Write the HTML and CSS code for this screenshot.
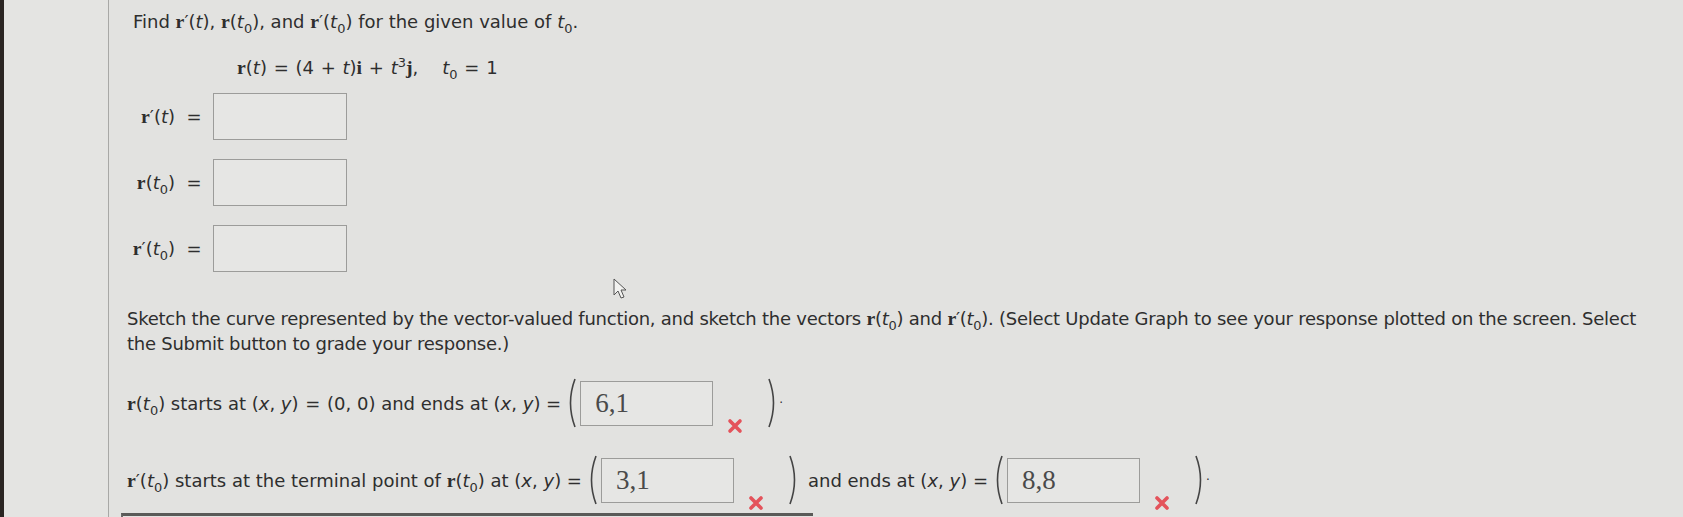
FILE: index.html
```html
<!DOCTYPE html>
<html>
<head>
<meta charset="utf-8">
<link rel="stylesheet" href="styles.css">
</head>
<body>
<div class="frame">
  <div class="edge"></div>
  <div class="side"></div>
  <div class="main">
    <p class="q1">Find <b class="r">r</b>′(<i>t</i>), <b class="r">r</b>(<i>t</i><sub>0</sub>), and <b class="r">r</b>′(<i>t</i><sub>0</sub>) for the given value of <i>t</i><sub>0</sub>.</p>
    <p class="eq"><b class="r">r</b>(<i>t</i>) <span class="op">=</span> (4 <span class="op">+</span> <i>t</i>)<b class="r">i</b> <span class="op">+</span> <i>t</i><sup>3</sup><b class="r">j</b>,<span class="sp"></span><i>t</i><sub>0</sub> <span class="op">=</span> 1</p>

    <div class="answers">
      <div class="lab"><b class="r">r</b>′(<i>t</i>)</div><div class="eqs">=</div><div class="box"></div>
      <div class="lab"><b class="r">r</b>(<i>t</i><sub>0</sub>)</div><div class="eqs">=</div><div class="box"></div>
      <div class="lab"><b class="r">r</b>′(<i>t</i><sub>0</sub>)</div><div class="eqs">=</div><div class="box"></div>
    </div>

    <p class="sketch">Sketch the curve represented by the vector-valued function, and sketch the vectors <b class="r">r</b>(<i>t</i><sub>0</sub>) and <b class="r">r</b>′(<i>t</i><sub>0</sub>). (Select Update Graph to see your response plotted on the screen. Select the Submit button to grade your response.)</p>

    <div class="vrow first">
      <span><b class="r">r</b>(<i>t</i><sub>0</sub>) starts at (<i>x</i>, <i>y</i>) <span class="op">=</span> (0, 0) and ends at (<i>x</i>, <i>y</i>) =</span>
      <svg class="paren" viewBox="0 0 12 52"><path d="M10 2 Q1 26 10 50" fill="none" stroke="#444" stroke-width="1.6"/></svg>
      <div class="vbox">6,1</div>
      <svg class="xmark" viewBox="0 0 16 16"><path d="M3 3 L13 13 M13 3 L3 13" stroke="#e4535b" stroke-width="3.6" stroke-linecap="round"/></svg>
      <svg class="paren" viewBox="0 0 12 52"><path d="M2 2 Q11 26 2 50" fill="none" stroke="#444" stroke-width="1.6"/></svg>
      <span class="dot">.</span>
    </div>

    <div class="vrow second">
      <span><b class="r">r</b>′(<i>t</i><sub>0</sub>) starts at the terminal point of <b class="r">r</b>(<i>t</i><sub>0</sub>) at (<i>x</i>, <i>y</i>) =</span>
      <svg class="paren" viewBox="0 0 12 52"><path d="M10 2 Q1 26 10 50" fill="none" stroke="#444" stroke-width="1.6"/></svg>
      <div class="vbox">3,1</div>
      <svg class="xmark" viewBox="0 0 16 16"><path d="M3 3 L13 13 M13 3 L3 13" stroke="#e4535b" stroke-width="3.6" stroke-linecap="round"/></svg>
      <svg class="paren" viewBox="0 0 12 52"><path d="M2 2 Q11 26 2 50" fill="none" stroke="#444" stroke-width="1.6"/></svg>
      <span class="mid">and ends at (<i>x</i>, <i>y</i>) =</span>
      <svg class="paren" viewBox="0 0 12 52"><path d="M10 2 Q1 26 10 50" fill="none" stroke="#444" stroke-width="1.6"/></svg>
      <div class="vbox">8,8</div>
      <svg class="xmark" viewBox="0 0 16 16"><path d="M3 3 L13 13 M13 3 L3 13" stroke="#e4535b" stroke-width="3.6" stroke-linecap="round"/></svg>
      <svg class="paren" viewBox="0 0 12 52"><path d="M2 2 Q11 26 2 50" fill="none" stroke="#444" stroke-width="1.6"/></svg>
      <span class="dot">.</span>
    </div>

    <div class="graphframe"></div>

    <svg class="cursor" viewBox="0 0 14 22"><path d="M1 1 L1 17 L5 13 L8 20 L11 19 L8 12 L13 12 Z" fill="#f2f2f0" stroke="#555" stroke-width="1"/></svg>
  </div>
</div>
</body>
</html>
```

FILE: styles.css
```css
html, body {
  margin: 0;
  padding: 0;
  background: #e2e2e0;
}
.frame {
  display: flex;
  height: 517px;
  overflow: hidden;
  font-family: "DejaVu Sans", Verdana, sans-serif;
  color: #2e2e2e;
}
.edge {
  width: 4px;
  background: #2a2522;
  flex: none;
}
.side {
  width: 104px;
  flex: none;
  border-right: 1px solid #a8a8a6;
  background: #e4e4e2;
}
.main {
  position: relative;
  flex: 1;
  padding-left: 18px;
  padding-right: 30px;
  font-size: 18px;
}
p { margin: 0; }
.r {
  font-family: "Liberation Serif", serif;
  font-weight: bold;
  font-size: 1.1em;
}
i { font-style: italic; }
sub, sup { font-size: 0.72em; line-height: 0; }
sub { vertical-align: -0.35em; }
.op { padding: 0 1px; }
.q1 {
  padding-top: 9px;
  padding-left: 6px;
  line-height: 24px;
}
.eq {
  margin-top: 21px;
  padding-left: 110px;
  line-height: 24px;
}
.sp { display: inline-block; width: 24px; }
.answers {
  margin-top: 13px;
  display: grid;
  grid-template-columns: 48px 38px 134px;
  grid-auto-rows: 46px;
  row-gap: 20px;
  align-items: center;
}
.lab { text-align: right; white-space: nowrap; direction: rtl; }
.lab > * { direction: ltr; }
.eqs { text-align: center; }
.box {
  height: 45px;
  border: 1px solid #9c9c9a;
  background: #e6e6e4;
}
.sketch {
  margin-top: 35px;
  line-height: 25px;
  letter-spacing: -0.25px;
}
.vrow {
  display: flex;
  align-items: center;
  height: 50px;
}
.vrow.first { margin-top: 22px; }
.vrow.second { margin-top: 27px; }
.paren {
  width: 12px;
  height: 52px;
  flex: none;
}
.vrow > span:first-child { margin-right: 4px; }
.vbox {
  width: 133px;
  height: 45px;
  border: 1px solid #9c9c9a;
  background: #e6e6e4;
  margin-left: 3px;
  font-family: "Liberation Serif", serif;
  font-size: 27px;
  color: #4a4a4a;
  padding-left: 14px;
  box-sizing: border-box;
  line-height: 42px;
  flex: none;
}
.xmark {
  width: 16px;
  height: 16px;
  flex: none;
  align-self: flex-end;
  margin: 0 24px -6px 14px;
}
.mid { margin-left: 8px; margin-right: 4px; }
.dot { align-self: flex-end; margin-bottom: 22px; font-size: 12px; }
.graphframe {
  margin-top: 8px;
  margin-left: -6px;
  width: 690px;
  height: 20px;
  border-top: 3px solid #5a5a58;
  border-left: 2px solid #6a6a68;
}
.cursor {
  position: absolute;
  left: 504px;
  top: 278px;
  width: 14px;
  height: 22px;
}
```
